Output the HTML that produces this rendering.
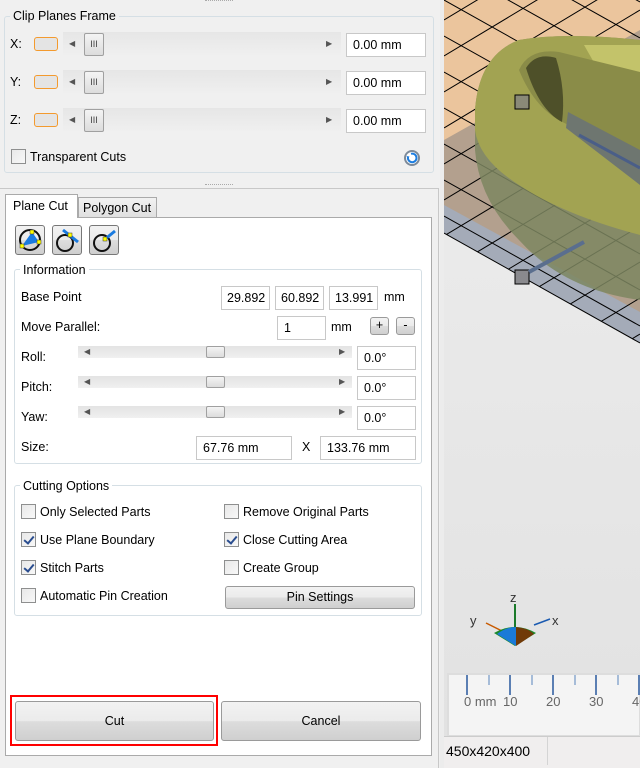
<!DOCTYPE html>
<html><head><meta charset="utf-8"><style>
*{box-sizing:border-box;margin:0;padding:0}
body{width:640px;height:768px;overflow:hidden;background:#f0f0f0;font-family:"Liberation Sans",sans-serif;font-size:12.5px;color:#000;position:relative}
.a{position:absolute}
.grp{position:absolute;border:1px solid #d5dfe5;border-radius:3px}
.gt{position:absolute;background:#f0f0f0;padding:0 3px;line-height:14px}
.w .gt{background:#fff}
.inp{position:absolute;background:#fff;border:1px solid #c8c8c8;line-height:22px;padding-left:6px}
.orng{position:absolute;width:24px;height:14px;border:1.5px solid #f39a2e;border-radius:3px;background:#e4e4e4}
.trough{position:absolute;background:linear-gradient(#e6e6e6,#f0f0f0);height:25px}
.thumb{position:absolute;border:1px solid #a0a0a0;border-radius:2px;background:linear-gradient(#f4f4f4,#dcdcdc);font-size:9px;text-align:center;color:#444;line-height:20px}
.cb{position:absolute;width:15px;height:15px;border:1px solid #8e8f8f;background:linear-gradient(135deg,#e8e8e8,#f8f8f8)}
.cb.c::after{content:"";position:absolute;left:4px;top:1px;width:4px;height:8px;border:solid #2a4d8f;border-width:0 2px 2px 0;transform:rotate(40deg)}
.lbl{position:absolute;line-height:15px}
.btn{position:absolute;border:1px solid #9a9a9a;border-radius:3px;background:linear-gradient(#f2f2f2 0,#ebebeb 50%,#dddddd 51%,#cfcfcf 100%);text-align:center}
.sl{position:absolute;height:12px;background:linear-gradient(#e3e3e3,#f0f0f0)}
.arr{position:absolute;font-size:8px;color:#555;line-height:12px}
</style></head><body>
<div class="a" style="left:205px;top:0;width:28px;height:3px;border-top:1px dotted #aaa"></div>
<div class="grp" style="left:4px;top:16px;width:430px;height:157px"></div>
<div class="gt" style="left:10px;top:9px">Clip Planes Frame</div>

<div class="lbl" style="left:10px;top:37px">X:</div>
<div class="orng" style="left:34px;top:37px"></div>
<div class="trough" style="left:63px;top:32px;width:278px"></div>
<div class="arr" style="left:69px;top:38px">◀</div><div class="arr" style="left:326px;top:38px">▶</div>
<div class="thumb" style="left:84px;top:33px;width:20px;height:23px">III</div>
<div class="inp" style="left:346px;top:33px;width:80px;height:24px">0.00 mm</div>

<div class="lbl" style="left:10px;top:75px">Y:</div>
<div class="orng" style="left:34px;top:75px"></div>
<div class="trough" style="left:63px;top:70px;width:278px"></div>
<div class="arr" style="left:69px;top:76px">◀</div><div class="arr" style="left:326px;top:76px">▶</div>
<div class="thumb" style="left:84px;top:71px;width:20px;height:23px">III</div>
<div class="inp" style="left:346px;top:71px;width:80px;height:24px">0.00 mm</div>

<div class="lbl" style="left:10px;top:113px">Z:</div>
<div class="orng" style="left:34px;top:113px"></div>
<div class="trough" style="left:63px;top:108px;width:278px"></div>
<div class="arr" style="left:69px;top:114px">◀</div><div class="arr" style="left:326px;top:114px">▶</div>
<div class="thumb" style="left:84px;top:109px;width:20px;height:23px">III</div>
<div class="inp" style="left:346px;top:109px;width:80px;height:24px">0.00 mm</div>

<div class="cb" style="left:11px;top:149px"></div>
<div class="lbl" style="left:30px;top:150px">Transparent Cuts</div>
<svg class="a" style="left:403px;top:149px" width="18" height="18"><circle cx="9" cy="9" r="8" fill="#7d8a99"/><circle cx="9" cy="9" r="6" fill="#fff"/><path d="M5 8 A4.3 4.3 0 1 0 8 4.8" stroke="#1c7de0" stroke-width="2" fill="none"/><path d="M3.5 7 L6.5 7.5 L5 10z" fill="#1c7de0"/></svg>

<div class="a" style="left:205px;top:184px;width:28px;border-top:1px dotted #aaa"></div>
<div class="a" style="left:0;top:188px;width:439px;height:580px;border-top:1px solid #c8c8c8;border-right:1px solid #c8c8c8"></div>
<div class="a" style="left:5px;top:217px;width:427px;height:539px;background:#fff;border:1px solid #aaa"></div>
<div class="a" style="left:5px;top:194px;width:73px;height:24px;background:#fff;border:1px solid #aaa;border-bottom:none;line-height:22px;padding-left:7px">Plane Cut</div>
<div class="a" style="left:78px;top:197px;width:79px;height:20px;background:linear-gradient(#f2f2f2,#e0e0e0);border:1px solid #aaa;border-bottom:none;line-height:20px;padding-left:4px">Polygon Cut</div>

<div class="btn" style="left:15px;top:225px;width:30px;height:30px;border-color:#777"></div>
<svg class="a" style="left:15px;top:225px" width="30" height="30"><circle cx="15" cy="15" r="10" fill="none" stroke="#111" stroke-width="2"/><path d="M7 21 L17 7 L24 17z" fill="#1a7be0"/><rect x="15" y="5" width="4" height="4" fill="#ff0" stroke="#333" stroke-width=".5"/><rect x="22" y="15" width="4" height="4" fill="#ff0" stroke="#333" stroke-width=".5"/><rect x="5" y="19" width="4" height="4" fill="#ff0" stroke="#333" stroke-width=".5"/></svg>
<div class="btn" style="left:52px;top:225px;width:30px;height:30px;border-color:#777"></div>
<svg class="a" style="left:52px;top:225px" width="30" height="30"><circle cx="13" cy="18" r="8" fill="none" stroke="#111" stroke-width="2"/><path d="M11 5 L26 17" stroke="#1a7be0" stroke-width="3"/><rect x="16" y="8" width="4" height="4" fill="#ff0" stroke="#333" stroke-width=".5"/></svg>
<div class="btn" style="left:89px;top:225px;width:30px;height:30px;border-color:#777"></div>
<svg class="a" style="left:89px;top:225px" width="30" height="30"><circle cx="13" cy="18" r="8" fill="none" stroke="#111" stroke-width="2"/><path d="M15 15 L26 6" stroke="#1a7be0" stroke-width="3"/><rect x="14" y="12" width="4" height="4" fill="#ff0" stroke="#333" stroke-width=".5"/></svg>

<div class="w">
<div class="grp" style="left:14px;top:269px;width:408px;height:195px"></div>
<div class="gt" style="left:20px;top:263px">Information</div>
</div>
<div class="lbl" style="left:21px;top:290px">Base Point</div>
<div class="inp" style="left:221px;top:286px;width:49px;height:24px;padding-left:5px">29.892</div>
<div class="inp" style="left:275px;top:286px;width:49px;height:24px;padding-left:5px">60.892</div>
<div class="inp" style="left:329px;top:286px;width:49px;height:24px;padding-left:5px">13.991</div>
<div class="lbl" style="left:384px;top:290px">mm</div>

<div class="lbl" style="left:21px;top:320px">Move Parallel:</div>
<div class="inp" style="left:277px;top:316px;width:49px;height:24px">1</div>
<div class="lbl" style="left:331px;top:320px">mm</div>
<div class="btn" style="left:370px;top:317px;width:19px;height:18px;line-height:15px">+</div>
<div class="btn" style="left:396px;top:317px;width:19px;height:18px;line-height:14px">-</div>

<div class="lbl" style="left:21px;top:350px">Roll:</div>
<div class="sl" style="left:78px;top:346px;width:274px"></div>
<div class="arr" style="left:84px;top:346px">◀</div><div class="arr" style="left:339px;top:346px">▶</div>
<div class="thumb" style="left:206px;top:346px;width:19px;height:12px"></div>
<div class="inp" style="left:357px;top:346px;width:59px;height:24px">0.0°</div>

<div class="lbl" style="left:21px;top:380px">Pitch:</div>
<div class="sl" style="left:78px;top:376px;width:274px"></div>
<div class="arr" style="left:84px;top:376px">◀</div><div class="arr" style="left:339px;top:376px">▶</div>
<div class="thumb" style="left:206px;top:376px;width:19px;height:12px"></div>
<div class="inp" style="left:357px;top:376px;width:59px;height:24px">0.0°</div>

<div class="lbl" style="left:21px;top:410px">Yaw:</div>
<div class="sl" style="left:78px;top:406px;width:274px"></div>
<div class="arr" style="left:84px;top:406px">◀</div><div class="arr" style="left:339px;top:406px">▶</div>
<div class="thumb" style="left:206px;top:406px;width:19px;height:12px"></div>
<div class="inp" style="left:357px;top:406px;width:59px;height:24px">0.0°</div>

<div class="lbl" style="left:21px;top:440px">Size:</div>
<div class="inp" style="left:196px;top:436px;width:96px;height:24px">67.76 mm</div>
<div class="lbl" style="left:302px;top:440px">X</div>
<div class="inp" style="left:320px;top:436px;width:96px;height:24px">133.76 mm</div>

<div class="w">
<div class="grp" style="left:14px;top:485px;width:408px;height:131px"></div>
<div class="gt" style="left:20px;top:479px">Cutting Options</div>
</div>
<div class="cb" style="left:21px;top:504px"></div><div class="lbl" style="left:40px;top:505px">Only Selected Parts</div>
<div class="cb c" style="left:21px;top:532px"></div><div class="lbl" style="left:40px;top:533px">Use Plane Boundary</div>
<div class="cb c" style="left:21px;top:560px"></div><div class="lbl" style="left:40px;top:561px">Stitch Parts</div>
<div class="cb" style="left:21px;top:588px"></div><div class="lbl" style="left:40px;top:589px">Automatic Pin Creation</div>
<div class="cb" style="left:224px;top:504px"></div><div class="lbl" style="left:243px;top:505px">Remove Original Parts</div>
<div class="cb c" style="left:224px;top:532px"></div><div class="lbl" style="left:243px;top:533px">Close Cutting Area</div>
<div class="cb" style="left:224px;top:560px"></div><div class="lbl" style="left:243px;top:561px">Create Group</div>
<div class="btn" style="left:225px;top:586px;width:190px;height:23px;line-height:21px">Pin Settings</div>

<div class="a" style="left:10px;top:695px;width:208px;height:51px;border:2px solid #f00"></div>
<div class="btn" style="left:15px;top:701px;width:199px;height:40px;line-height:38px">Cut</div>
<div class="btn" style="left:221px;top:701px;width:200px;height:40px;line-height:38px">Cancel</div>

<!-- viewport -->
<div class="a" style="left:440px;top:0;width:4px;height:768px;background:#ececec"></div>
<svg class="a" style="left:444px;top:0" width="196" height="736">
<defs><linearGradient id="bg" x1="0" y1="0" x2="0" y2="1"><stop offset="0" stop-color="#eeeeee"/><stop offset="1" stop-color="#e2e2e2"/></linearGradient>
<clipPath id="pl"><polygon points="0,0 196,0 196,343 0,233"/></clipPath></defs>
<rect width="196" height="736" fill="url(#bg)"/>
<polygon points="0,0 196,0 196,343 0,233" fill="#ebc59d"/>
<polygon points="0,140 196,30 196,343 0,233" fill="#b3a08e"/>
<polygon points="0,205 196,312 196,343 0,233" fill="#a4abb8"/>
<g clip-path="url(#pl)" stroke="#000" stroke-width="1" fill="none">
<path d="M0 -180L196 -70M0 -144L196 -34M0 -108L196 2M0 -72L196 38M0 -36L196 74M0 0L196 110M0 36L196 146M0 72L196 182M0 108L196 218M0 144L196 254M0 180L196 290M0 216L196 326"/>
<path d="M0 20L196 -98M0 56L196 -62M0 92L196 -26M0 128L196 10M0 164L196 46M0 200L196 82M0 236L196 118M0 272L196 154M0 308L196 190M0 344L196 226M0 380L196 262M0 416L196 298M0 452L196 334"/>
</g>
<path d="M0 233L196 343" stroke="#000" stroke-width="1"/>
<!-- torus -->
<path d="M31 110 Q35 55 75 40 Q120 32 196 40 L196 300 Q120 290 75 240 Q35 200 31 150z" fill="#7c8660" opacity=".85"/>
<path d="M31 110 Q35 55 75 40 Q120 32 196 40 L196 235 Q120 215 75 185 Q35 160 31 130z" fill="#a2a352"/>
<path d="M140 45 L196 45 L196 110 L160 80z" fill="#c3c36a"/>
<path d="M75 70 Q85 48 115 52 L196 72 L196 178 L125 125 Q92 112 75 70z" fill="#8a8c48"/>
<path d="M82 68 Q92 52 112 58 Q122 90 118 122 Q95 110 82 68z" fill="#4e5029"/>
<path d="M124 112 L196 150 L196 185 L122 128z" fill="#6e7670"/>
<path d="M135 135 L196 168" stroke="#4a5e88" stroke-width="3"/>
<rect x="71" y="95" width="14" height="14" fill="#8a8a78" stroke="#000"/>
<rect x="71" y="270" width="14" height="14" fill="#8a8a8e" stroke="#000"/>
<path d="M85 272 L140 242" stroke="#5a6e8e" stroke-width="4"/>
<text x="66" y="602" font-size="13" fill="#333" font-family="Liberation Sans">z</text>
<text x="26" y="625" font-size="13" fill="#333" font-family="Liberation Sans">y</text>
<text x="108" y="625" font-size="13" fill="#333" font-family="Liberation Sans">x</text>
<path d="M71 604 V645" stroke="#1a7a2a" stroke-width="2"/>
<path d="M42 623 L60 632" stroke="#c85a00" stroke-width="1.5"/><path d="M90 625 L106 619" stroke="#1a5ab0" stroke-width="1.5"/>
<path d="M50 633 Q71 621 92 633 L71 646z" fill="#1a8a2a"/>
<path d="M53 634 Q62 627 72 627 L72 646z" fill="#1a7ad8"/>
<path d="M72 627 Q84 628 90 634 L72 646z" fill="#703a08"/>
<rect x="4" y="674" width="192" height="62" fill="#f4f4f4" stroke="#ddd" stroke-width="2"/>
<g stroke="#5b7fb3" stroke-width="2"><path d="M23 675v20M66 675v20M109 675v20M152 675v20M195 675v20"/></g>
<g stroke="#a6bcd8" stroke-width="2"><path d="M45 675v10M88 675v10M131 675v10M174 675v10"/></g>
<g font-size="13" fill="#666" font-family="Liberation Sans"><text x="20" y="706">0 mm</text><text x="59" y="706">10</text><text x="102" y="706">20</text><text x="145" y="706">30</text><text x="188" y="706">40</text></g>
</svg>
<div class="a" style="left:444px;top:736px;width:196px;height:32px;background:#f0eeee;border-top:1px solid #ccc"></div>
<div class="a" style="left:547px;top:737px;height:28px;border-left:1px solid #d4d4d4"></div>
<div class="lbl" style="left:446px;top:744px;font-size:14px">450x420x400</div>
</body></html>
